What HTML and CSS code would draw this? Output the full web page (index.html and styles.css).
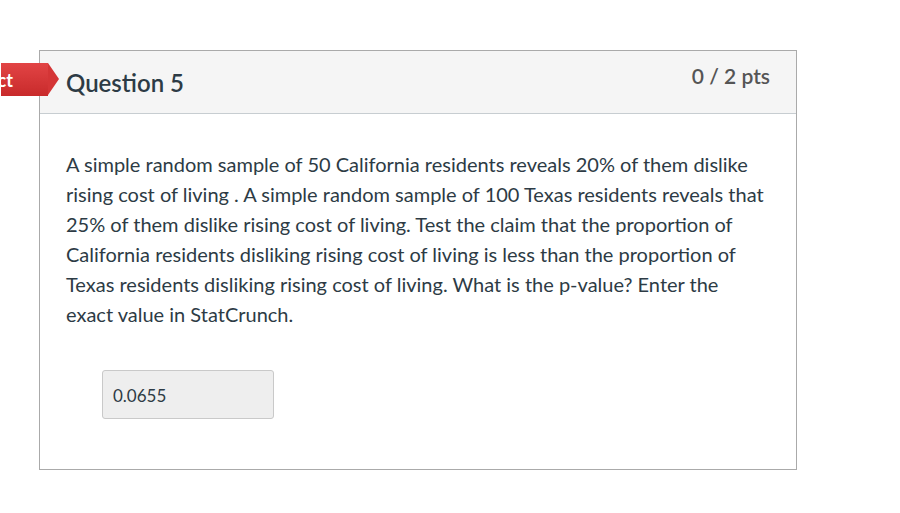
FILE: index.html
```html
<!DOCTYPE html>
<html>
<head>
<meta charset="utf-8">
<link rel="stylesheet" href="styles.css">
</head>
<body>
<div class="page">
  <div class="card">
    <div class="badge"><span class="badge-text">Correct</span></div>
    <div class="header">
      <div class="title">Question 5</div>
      <div class="pts">0 / 2 pts</div>
    </div>
    <div class="body">
      <p class="text">A simple random sample of 50 California residents reveals 20% of them dislike rising cost of living . A simple random sample of 100 Texas residents reveals that 25% of them dislike rising cost of living. Test the claim that the proportion of California residents disliking rising cost of living is less than the proportion of Texas residents disliking rising cost of living. What is the p-value? Enter the exact value in StatCrunch.</p>
      <div class="answer">0.0655</div>
    </div>
  </div>
</div>
</body>
</html>
```
FILE: styles.css
```css
html, body {
  margin: 0;
  padding: 0;
  background: #fff;
}
body {
  font-family: Lato, "Liberation Sans", sans-serif;
  color: #2d3b45;
}
.page {
  padding: 50px 0 0 39px;
  width: 758px;
}
.card {
  position: relative;
  border: 1px solid #aaa;
  height: 418px;
}
.badge {
  position: absolute;
  left: -39px;
  top: 12px;
  width: 47px;
  height: 33px;
  background: linear-gradient(#e24445, #c82a2b);
  overflow: hidden;
  display: flex;
  align-items: center;
  justify-content: flex-end;
}
.badge-text {
  color: #fff;
  font-weight: bold;
  font-size: 18px;
  margin-right: 35px;
  white-space: nowrap;
}
.card .badge + .header::before {
  content: "";
  position: absolute;
  left: 8px;
  top: 12px;
  width: 0;
  height: 0;
  border-top: 16.5px solid transparent;
  border-bottom: 16.5px solid transparent;
  border-left: 11px solid #d43536;
}
.header {
  height: 62px;
  background: #f5f5f5;
  border-bottom: 1px solid #c7cdd1;
  display: flex;
  justify-content: space-between;
  align-items: flex-start;
  padding: 0 26px 0 26px;
}
.title {
  font-size: 24px;
  font-weight: 600;
  margin-top: 17px;
  color: #2d3b45;
}
.pts {
  font-size: 21px;
  font-weight: 600;
  color: #555;
  margin-top: 12px;
}
.body {
  padding: 35px 30px 0 26px;
}
.text {
  margin: 0;
  font-size: 20px;
  line-height: 30px;
}
.answer {
  margin: 41px 0 0 36px;
  width: 172px;
  height: 49px;
  box-sizing: border-box;
  border: 1px solid #c9c9c9;
  border-radius: 3px;
  background: #eeeeee;
  font-size: 17px;
  padding: 14px 0 0 10px;
  color: #2d3b45;
}
```
